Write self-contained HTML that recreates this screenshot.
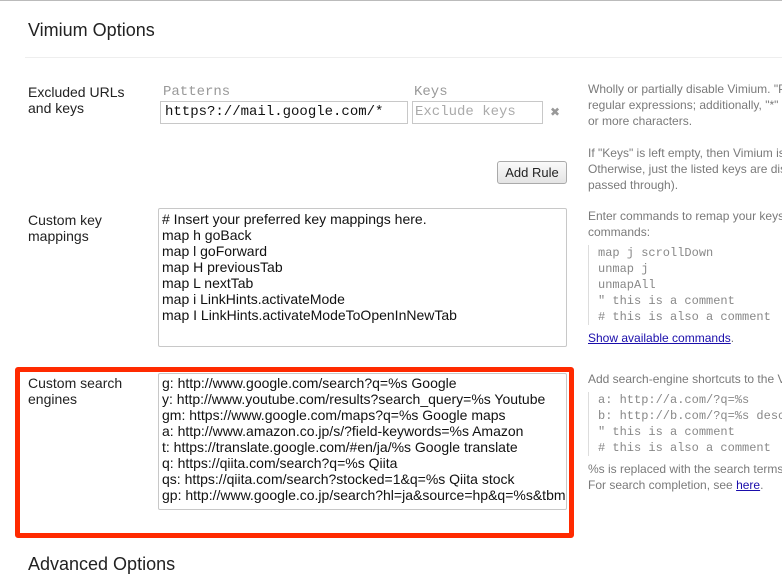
<!DOCTYPE html>
<html><head><style>
body{margin:0;width:782px;height:567px;overflow:hidden;background:#fff;font-family:"Liberation Sans",Arial,sans-serif;position:relative;color:#222}
.a{position:absolute;white-space:nowrap}
.lbl{font-size:14px;line-height:16px;color:#222}
.ta{position:absolute;border:1px solid #c8c8c8;border-radius:2px;box-sizing:border-box;padding:2px 3px;font-size:14px;line-height:16px;color:#111;white-space:pre;overflow:hidden}
.r{font-size:12px;line-height:16px;color:#7a7a7a}
.code{position:absolute;border-left:1px solid #ddd;padding-left:9px;font-family:"Liberation Mono",monospace;font-size:12px;line-height:16px;color:#888;white-space:pre}
.mono{font-family:"Liberation Mono",monospace}
#rc{position:absolute;left:0;top:0;width:782px;height:567px;overflow:hidden}
</style></head><body>
<div class="a" style="left:0;top:0;width:782px;height:1px;background:#bbb"></div>
<div class="a" style="left:28px;top:20px;font-size:18px;color:#222">Vimium Options</div>
<div class="a" style="left:25px;top:57px;width:757px;height:1px;background:#eee"></div>

<div class="a lbl" style="left:28px;top:84px">Excluded URLs<br>and keys</div>
<div class="a mono" style="left:163px;top:84px;font-size:14px;color:#999">Patterns</div>
<div class="a mono" style="left:414px;top:84px;font-size:14px;color:#999">Keys</div>
<div class="a mono" style="left:160px;top:101px;width:248px;height:23px;border:1px solid #c8c8c8;box-sizing:border-box;font-size:14px;line-height:21px;padding-left:4px;color:#111">https?://mail.google.com/*</div>
<div class="a mono" style="left:412px;top:101px;width:131px;height:23px;border:1px solid #c8c8c8;box-sizing:border-box;font-size:14px;line-height:21px;padding-left:2px;color:#aaa">Exclude keys</div>
<div class="a" style="left:550px;top:105px;font-size:12px;color:#999">✖</div>
<div class="a" style="left:497px;top:161px;width:70px;height:23px;border:1px solid #aaa;border-radius:3px;box-sizing:border-box;background:linear-gradient(#fafafa,#e4e4e4);font-size:13px;line-height:21px;text-align:center;color:#222">Add Rule</div>

<div class="a lbl" style="left:28px;top:212px">Custom key<br>mappings</div>
<div class="ta" style="left:158px;top:208px;width:409px;height:139px"># Insert your preferred key mappings here.
map h goBack
map l goForward
map H previousTab
map L nextTab
map i LinkHints.activateMode
map I LinkHints.activateModeToOpenInNewTab</div>

<div class="a" style="left:15px;top:367px;width:559px;height:171px;border:5px solid #ff2a00;border-radius:3px;box-sizing:border-box"></div>
<div class="a lbl" style="left:28px;top:375px">Custom search<br>engines</div>
<div class="ta" style="left:158px;top:373px;width:409px;height:137px;padding-top:1px">g: http://www.google.com/search?q=%s Google
y: http://www.youtube.com/results?search_query=%s Youtube
gm: https://www.google.com/maps?q=%s Google maps
a: http://www.amazon.co.jp/s/?field-keywords=%s Amazon
t: https://translate.google.com/#en/ja/%s Google translate
q: https://qiita.com/search?q=%s Qiita
qs: https://qiita.com/search?stocked=1&amp;q=%s Qiita stock
gp: http://www.google.co.jp/search?hl=ja&amp;source=hp&amp;q=%s&amp;tbm=isch</div>
<div class="a" style="left:28px;top:554px;font-size:18px;color:#222">Advanced Options</div>

<div id="rc">
<div class="a r" style="left:588px;top:81px">Wholly or partially disable Vimium. "Patterns"<br>regular expressions; additionally, "*" matches<br>or more characters.</div>
<div class="a r" style="left:588px;top:145px">If "Keys" is left empty, then Vimium is<br>Otherwise, just the listed keys are disabled<br>passed through).</div>
<div class="a r" style="left:588px;top:208px">Enter commands to remap your keys<br>commands:</div>
<div class="code" style="left:588px;top:245px">map j scrollDown
unmap j
unmapAll
" this is a comment
# this is also a comment</div>
<div class="a r" style="left:588px;top:330px;color:#777"><span style="color:#1a0dab;text-decoration:underline">Show available commands</span>.</div>
<div class="a r" style="left:588px;top:371px">Add search-engine shortcuts to the Vomnibar</div>
<div class="code" style="left:588px;top:392px">a: http://a.com/?q=%s
b: http://b.com/?q=%s description
" this is a comment
# this is also a comment</div>
<div class="a r" style="left:588px;top:461px">%s is replaced with the search terms<br>For search completion, see <span style="color:#1a0dab;text-decoration:underline">here</span>.</div>
</div>
</body></html>
